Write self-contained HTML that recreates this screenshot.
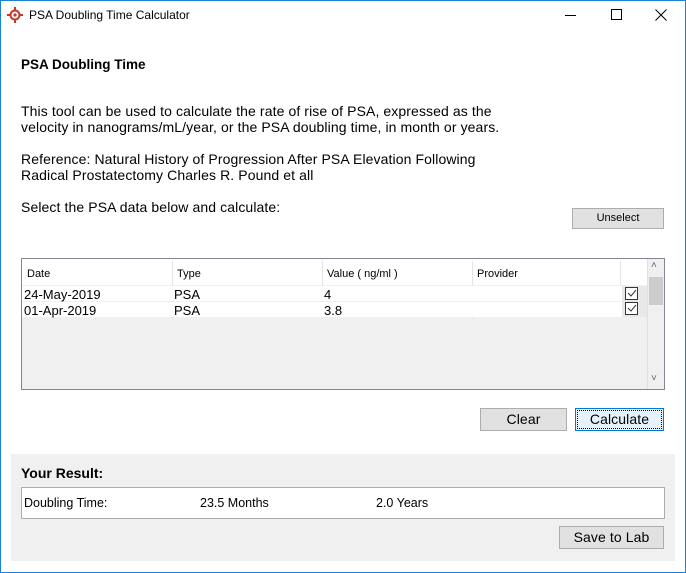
<!DOCTYPE html>
<html><head><meta charset="utf-8"><style>
*{margin:0;padding:0;box-sizing:border-box}
body{width:686px;height:573px;background:#fff;font-family:"Liberation Sans",sans-serif;font-size:13px;color:#000;position:relative;overflow:hidden}
.a{position:absolute;white-space:nowrap}
.btn{position:absolute;background:#e1e1e1;border:1px solid #adadad;text-align:center;font-size:13px}
.s{font-size:11px}
.m{font-size:14px;letter-spacing:0.1px}
</style></head><body>
<div class="a" style="left:0;top:0;width:686px;height:573px;border:1px solid #1883d7"></div>
<svg class="a" style="left:7px;top:7px" width="16" height="16" viewBox="0 0 16 16"><circle cx="8" cy="8" r="4.5" fill="none" stroke="#c0392b" stroke-width="2"/><circle cx="8" cy="8" r="1.6" fill="#c0392b"/><path d="M8 0v3M8 13v3M0 8h3M13 8h3" stroke="#c0392b" stroke-width="2"/></svg>
<div class="a" style="left:29px;top:8px;font-size:12px">PSA Doubling Time Calculator</div>
<div class="a" style="left:565px;top:15px;width:11px;height:1px;background:#000"></div>
<div class="a" style="left:611px;top:9px;width:11px;height:11px;border:1px solid #000"></div>
<svg class="a" style="left:655px;top:9px" width="12" height="12"><path d="M0.5 0.5l11 11M11.5 0.5l-11 11" stroke="#000"/></svg>
<div class="a" style="left:21px;top:57px;font-weight:bold;font-size:13.5px">PSA Doubling Time</div>
<div class="a m" style="left:21px;top:103px;line-height:16px">This tool can be used to calculate the rate of rise of PSA, expressed as the<br>velocity in nanograms/mL/year, or the PSA doubling time, in month or years.</div>
<div class="a m" style="left:21px;top:151px;line-height:16px">Reference: Natural History of Progression After PSA Elevation Following<br>Radical Prostatectomy Charles R. Pound et all</div>
<div class="a m" style="left:21px;top:199px">Select the PSA data below and calculate:</div>
<div class="btn s" style="left:572px;top:208px;width:92px;height:21px;line-height:19px">Unselect</div>
<div class="a" style="left:21px;top:258px;width:644px;height:132px;border:1px solid #828790;background:#f0f0f0">
 <div class="a" style="left:0;top:0;width:626px;height:26px;background:#fff"></div>
 <div class="a s" style="left:5px;top:9px">Date</div>
 <div class="a s" style="left:155px;top:9px">Type</div>
 <div class="a s" style="left:305px;top:9px">Value ( ng/ml )</div>
 <div class="a s" style="left:455px;top:9px">Provider</div>
 <div class="a" style="left:150px;top:2px;width:1px;height:58px;background:#e5e5e5"></div>
 <div class="a" style="left:300px;top:2px;width:1px;height:58px;background:#e5e5e5"></div>
 <div class="a" style="left:450px;top:2px;width:1px;height:58px;background:#e5e5e5"></div>
 <div class="a" style="left:598px;top:2px;width:1px;height:26px;background:#e5e5e5"></div>
 <div class="a" style="left:0;top:27px;width:626px;height:15px;background:#fff"></div>
 <div class="a" style="left:0;top:43px;width:626px;height:15px;background:#fff"></div>
 <div class="a" style="left:600px;top:27px;width:26px;height:31px;background:#e8e8e8"></div>
 <div class="a" style="left:2px;top:28px">24-May-2019</div><div class="a" style="left:152px;top:28px">PSA</div><div class="a" style="left:302px;top:28px">4</div>
 <div class="a" style="left:2px;top:44px">01-Apr-2019</div><div class="a" style="left:152px;top:44px">PSA</div><div class="a" style="left:302px;top:44px">3.8</div>
 <svg class="a" style="left:603px;top:28px" width="13" height="29"><rect x=".5" y=".5" width="12" height="12" fill="#fff" stroke="#333"/><path d="M3 6l3 3 5-6" fill="none" stroke="#333"/><rect x=".5" y="15.5" width="12" height="12" fill="#fff" stroke="#333"/><path d="M3 21l3 3 5-6" fill="none" stroke="#333"/></svg>
 <div class="a" style="left:625px;top:0;width:17px;height:130px;background:#f0f0f0;border-left:1px solid #e0e0e0"></div>
 <div class="a" style="left:627px;top:18px;width:14px;height:28px;background:#cdcdcd"></div>
 <div class="a" style="left:629px;top:1px;font-size:10px;color:#606060">&#708;</div>
 <div class="a" style="left:629px;top:114px;font-size:10px;color:#606060">&#709;</div>
</div>
<div class="btn m" style="left:480px;top:408px;width:87px;height:23px;line-height:21px">Clear</div>
<div class="btn m" style="left:575px;top:408px;width:89px;height:23px;background:#e5f1fb;border:1px solid #0078d7;padding:1px"><div style="border:1px dotted #000;height:19px;line-height:17px">Calculate</div></div>
<div class="a" style="left:11px;top:454px;width:664px;height:107px;background:#f0f0f0"></div>
<div class="a" style="left:21px;top:465px;font-weight:bold;font-size:14px">Your Result:</div>
<div class="a" style="left:21px;top:487px;width:644px;height:32px;background:#fff;border:1px solid #adadad"></div>
<div class="a" style="left:24px;top:496px;font-size:12.5px">Doubling Time:</div>
<div class="a" style="left:200px;top:496px;font-size:12.5px">23.5 Months</div>
<div class="a" style="left:376px;top:496px;font-size:12.5px">2.0 Years</div>
<div class="btn m" style="left:559px;top:526px;width:105px;height:23px;line-height:21px">Save to Lab</div>
</body></html>
